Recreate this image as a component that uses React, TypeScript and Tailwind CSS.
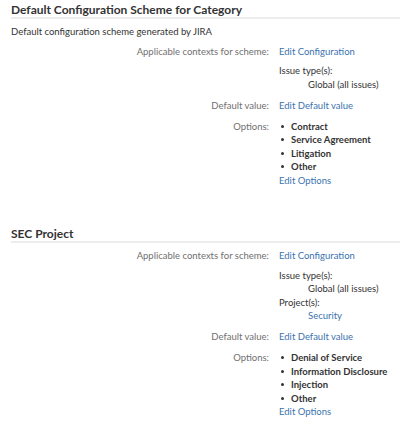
const font = { fontFamily: 'Lato, "Open Sans", Arial, sans-serif' };

type Context = { label: string; values: { text: string; link?: boolean }[] };

function Bullets({ items }: { items: string[] }) {
  return (
    <ul>
      {items.map((item) => (
        <li key={item} className="flex items-center font-bold text-[#333] whitespace-nowrap">
          <span className="ml-[2px] mr-[7px] w-[3px] h-[3px] rounded-full bg-[#333]" />
          {item}
        </li>
      ))}
    </ul>
  );
}

function Scheme({
  title,
  description,
  contexts,
  options,
}: {
  title: string;
  description?: string;
  contexts: Context[];
  options: string[];
}) {
  return (
    <section>
      <h2 className="text-[12px] leading-[14px] font-bold text-[#333] pt-[3px] border-b-2 border-[#ededed]">
        {title}
      </h2>
      {description && <p className="mt-[6px] text-[#333]">{description}</p>}
      <dl className="grid grid-cols-[258px_1fr] gap-x-[10px] gap-y-[7.5px] mt-[6px]">
        <dt className="text-right text-[#707070]">Applicable contexts for scheme:</dt>
        <dd>
          <a className="text-[#3b73af]">Edit Configuration</a>
          <div className="mt-[6px]">
            {contexts.map((c) => (
              <div key={c.label}>
                <div className="text-[#333]">{c.label}</div>
                {c.values.map((v) => (
                  <div key={v.text} className={`pl-[29px] ${v.link ? 'text-[#3b73af]' : 'text-[#333]'}`}>
                    {v.text}
                  </div>
                ))}
              </div>
            ))}
          </div>
        </dd>
        <dt className="text-right text-[#707070]">Default value:</dt>
        <dd>
          <a className="text-[#3b73af]">Edit Default value</a>
        </dd>
        <dt className="text-right text-[#707070]">Options:</dt>
        <dd>
          <Bullets items={options} />
          <a className="text-[#3b73af]">Edit Options</a>
        </dd>
      </dl>
    </section>
  );
}

export default function App() {
  return (
    <div className="w-[400px] h-[423px] bg-white pl-[11px] text-[9.5px] leading-[13.5px]" style={font}>
      <Scheme
        title="Default Configuration Scheme for Category"
        description="Default configuration scheme generated by JIRA"
        contexts={[{ label: 'Issue type(s):', values: [{ text: 'Global (all issues)' }] }]}
        options={['Contract', 'Service Agreement', 'Litigation', 'Other']}
      />
      <div className="h-[37px]" />
      <Scheme
        title="SEC Project"
        contexts={[
          { label: 'Issue type(s):', values: [{ text: 'Global (all issues)' }] },
          { label: 'Project(s):', values: [{ text: 'Security', link: true }] },
        ]}
        options={['Denial of Service', 'Information Disclosure', 'Injection', 'Other']}
      />
    </div>
  );
}
